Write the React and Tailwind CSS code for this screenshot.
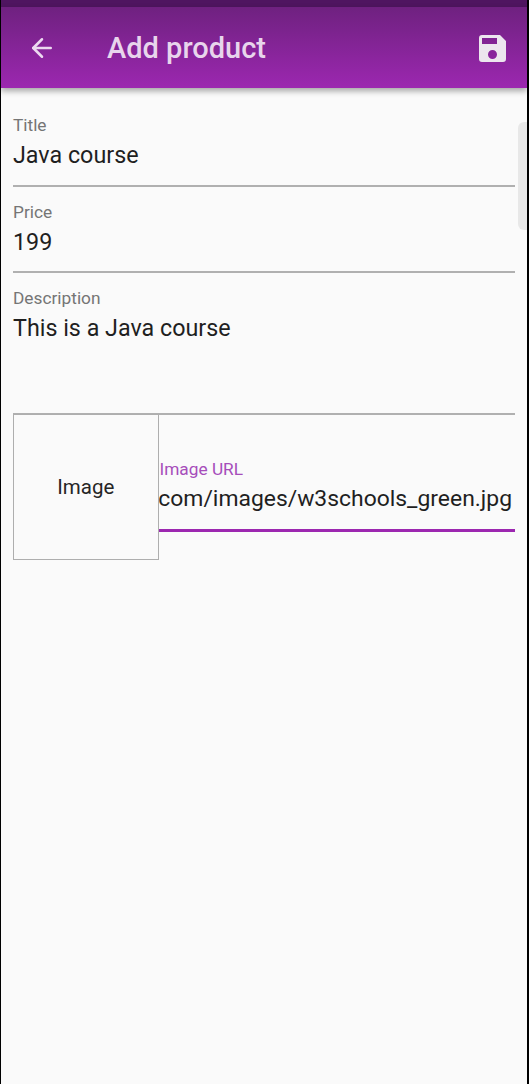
import { ArrowLeft } from 'lucide-react';

function Field({ label, value, height }) {
  return (
    <div className={`${height} border-b-2 border-[#b0b0b0] pt-[14px]`}>
      <div className="text-[17.3px] leading-[22px] text-[#757575]">{label}</div>
      <div className="text-[23.3px] leading-[38px] text-[#1f1f1f]">{value}</div>
    </div>
  );
}

export default function App() {
  return (
    <div className="relative h-[1084px] overflow-hidden border-l border-r-2 border-black bg-[#fafafa] font-['Roboto',sans-serif]">
      <div className="h-[7px] bg-[#4f1560]" />
      <header className="flex h-[81px] items-center bg-gradient-to-b from-[#6f2180] to-[#9c27b0] shadow-[0_3px_6px_rgba(0,0,0,0.35)]">
        <ArrowLeft className="ml-[26px] h-[30px] w-[30px] text-[#ecd9f0]" strokeWidth={2} />
        <h1 className="ml-[50px] mt-[2px] flex-1 text-[29px] font-medium text-[#e8d5ec]">Add product</h1>
        <svg className="mr-[21px] mt-[2px] h-[27px] w-[27px] text-[#ece6ee]" viewBox="3 3 18 18" fill="currentColor">
          <path d="M17 3H5a2 2 0 0 0-2 2v14a2 2 0 0 0 2 2h14a2 2 0 0 0 2-2V7l-4-4zm-5 16a3 3 0 1 1 0-6 3 3 0 0 1 0 6zm3-10H5V5h10v4z" />
        </svg>
      </header>

      <main className="pl-3 pr-3 pt-3">
        <Field label="Title" value="Java course" height="h-[87px]" />
        <Field label="Price" value="199" height="h-[86px]" />
        <Field label="Description" value="This is a Java course" height="h-[142px]" />

        <div className="-mt-[1px] flex items-start">
          <div className="flex h-[146px] w-[145.5px] shrink-0 items-center justify-center border-[1.5px] border-[#aeaeae] text-[20.5px] text-[#262626]">
            Image
          </div>
          <div className="mt-[44px] min-w-0 flex-1 overflow-hidden border-b-[3px] border-[#9c27b0]">
            <div className="pl-px text-[17.3px] leading-[22px] text-[#a64dba]">Image URL</div>
            <div className="flex h-[49px] justify-end whitespace-nowrap pr-[3px] pt-[1px]">
              <span className="text-[22.9px] leading-[36px] text-[#1f1f1f]">com/images/w3schools_green.jpg</span>
            </div>
          </div>
        </div>
      </main>

      <div className="absolute right-0 top-[122px] h-[108px] w-[9px] rounded-l-[6px] bg-[#e8e8e8]" />
    </div>
  );
}
